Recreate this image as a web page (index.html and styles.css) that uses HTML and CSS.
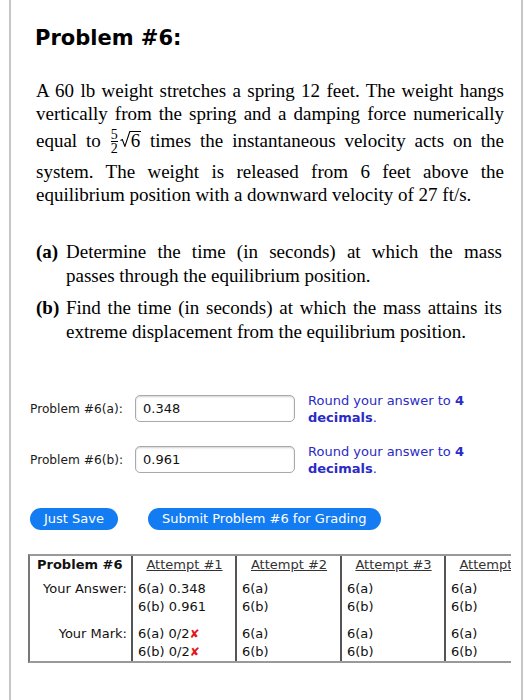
FILE: index.html
```html
<!DOCTYPE html>
<html>
<head>
<meta charset="utf-8">
<link rel="stylesheet" href="styles.css">
</head>
<body>
<div class="page">
  <h1 class="title">Problem #6:</h1>
  <p class="stmt">A 60 lb weight stretches a spring 12 feet. The weight hangs vertically from the spring and a damping force numerically equal to <span class="frac"><span class="num">5</span><span class="den">2</span></span><svg class="radsign" width="11" height="16" viewBox="0 0 11 16"><path d="M0.5 9.5 L2.3 8.5 L4.9 15.4 L9.8 0.5 L11 0.5" fill="none" stroke="#000" stroke-width="1.1"/></svg><span class="radicand">6</span> times the instantaneous velocity acts on the system. The weight is released from 6 feet above the equilibrium position with a downward velocity of 27 ft/s.</p>

  <div class="parts">
    <div class="part"><b class="tag">(a)</b><span class="ptext">Determine the time (in seconds) at which the mass passes through the equilibrium position.</span></div>
    <div class="part"><b class="tag">(b)</b><span class="ptext">Find the time (in seconds) at which the mass attains its extreme displacement from the equilibrium position.</span></div>
  </div>

  <div class="ans-row">
    <span class="lbl">Problem #6(a):</span>
    <span class="field">0.348</span>
    <span class="hint">Round your answer to <b>4</b> <b>decimals</b>.</span>
  </div>
  <div class="ans-row">
    <span class="lbl">Problem #6(b):</span>
    <span class="field">0.961</span>
    <span class="hint">Round your answer to <b>4</b> <b>decimals</b>.</span>
  </div>

  <div class="btns">
    <span class="btn">Just Save</span>
    <span class="btn">Submit Problem #6 for Grading</span>
  </div>

  <div class="tbl-wrap">
    <table class="tbl">
      <colgroup>
        <col class="c0"><col class="c1"><col class="c2"><col class="c3"><col class="c4">
      </colgroup>
      <tr class="hd">
        <th class="first">Problem #6</th>
        <th><span class="lnk">Attempt #1</span></th>
        <th><span class="lnk">Attempt #2</span></th>
        <th><span class="lnk">Attempt #3</span></th>
        <th><span class="lnk">Attempt #4</span></th>
      </tr>
      <tr class="r-ans">
        <td class="first">Your Answer:</td>
        <td>6(a) 0.348<br>6(b) 0.961</td>
        <td>6(a)<br>6(b)</td>
        <td>6(a)<br>6(b)</td>
        <td>6(a)<br>6(b)</td>
      </tr>
      <tr class="r-mark">
        <td class="first">Your Mark:</td>
        <td>6(a) 0/2<span class="x">✘</span><br>6(b) 0/2<span class="x">✘</span></td>
        <td>6(a)<br>6(b)</td>
        <td>6(a)<br>6(b)</td>
        <td>6(a)<br>6(b)</td>
      </tr>
    </table>
  </div>
</div>
</body>
</html>
```

FILE: styles.css
```css
html, body {
  margin: 0;
  padding: 0;
  background: #fff;
}

.page {
  margin-left: 9px;
  width: 510px;
  min-height: 700px;
  border-left: 2px solid #c6c6c6;
  border-right: 2px solid #c6c6c6;
  padding-top: 26px;
  color: #000;
}

.title {
  margin: 0 0 0 24px;
  font: bold 21px/24px "DejaVu Sans", Verdana, sans-serif;
}

.stmt {
  margin: 30px 17px 0 25px;
  font: 19px/22.7px "Liberation Serif", "Times New Roman", serif;
  text-align: justify;
}

.frac {
  display: inline-block;
  box-sizing: border-box;
  height: 36px;
  overflow: hidden;
  vertical-align: -14px;
  padding: 4px 1px 0 1px;
  font-size: 14px;
  line-height: 12px;
  text-align: center;
}

.num {
  display: block;
  border-bottom: 1px solid #000;
}

.den {
  display: block;
  padding-top: 1px;
}

.radsign {
  vertical-align: baseline;
  margin-left: 1px;
}

.radicand {
  display: inline-block;
  line-height: 17px;
  border-top: 1px solid #000;
  padding-right: 1px;
}

.parts {
  margin: 33px 19px 0 25px;
  font: 19px/24.5px "Liberation Serif", "Times New Roman", serif;
}

.part {
  display: flex;
}

.part + .part {
  margin-top: 6.7px;
}

.tag {
  flex: 0 0 30px;
  font-weight: bold;
}

.ptext {
  flex: 1;
  text-align: justify;
}

.ans-row {
  display: flex;
  align-items: center;
  margin: 47px 0 0 19px;
}

.ans-row + .ans-row {
  margin-top: 17px;
}

.lbl {
  flex: 0 0 105px;
  font: 12.2px/16px "DejaVu Sans", Verdana, sans-serif;
  color: #1a1a1a;
}

.field {
  box-sizing: border-box;
  width: 160px;
  height: 27px;
  padding: 0 7px;
  border: 1px solid #a9a9a9;
  border-radius: 5px;
  box-shadow: inset 0 1px 2px rgba(0, 0, 0, 0.18);
  font: 13px/25px "DejaVu Sans", Verdana, sans-serif;
  color: #111;
}

.hint {
  margin-left: 13px;
  width: 175px;
  font: 13px/17px "DejaVu Sans", Verdana, sans-serif;
  color: #2b2bc6;
}

.btns {
  display: flex;
  gap: 30px;
  margin: 31px 0 0 19px;
}

.btn {
  height: 22px;
  padding: 0 14px;
  border-radius: 11px;
  background: #137cf2;
  color: #fff;
  font: 13px/22px "DejaVu Sans", Verdana, sans-serif;
}

.tbl-wrap {
  margin: 24px 0 0 17px;
  width: 483px;
  overflow: hidden;
}

.tbl {
  table-layout: fixed;
  width: 520px;
  border-spacing: 0;
  border-top: 2px solid #999;
  border-bottom: 2px solid #999;
  border-left: 2px solid #777;
  font: 13px/18px "DejaVu Sans", Verdana, sans-serif;
  color: #111;
}

.c0 { width: 101px; }
.c1 { width: 104px; }
.c2 { width: 105px; }
.c3 { width: 104px; }
.c4 { width: 104px; }

.tbl th,
.tbl td {
  border-left: 2px solid #555;
  vertical-align: top;
  white-space: nowrap;
  text-align: left;
  padding-left: 5px;
  padding-right: 4px;
}

.tbl th.first,
.tbl td.first {
  border-left: 0;
}

.hd th {
  padding-top: 0;
  padding-bottom: 2px;
  font-weight: normal;
  text-align: center;
}

.hd th.first {
  text-align: left;
  padding-left: 7px;
  font-weight: bold;
}

.lnk {
  text-decoration: underline;
  color: #333;
}

.r-ans td {
  padding-top: 4px;
  padding-bottom: 4px;
}

.r-mark td {
  padding-top: 5px;
  padding-bottom: 0;
}

.tbl td.first {
  text-align: right;
  padding-right: 4px;
}

.x {
  color: #e3161b;
  font-weight: bold;
  font-size: 12px;
}
```
